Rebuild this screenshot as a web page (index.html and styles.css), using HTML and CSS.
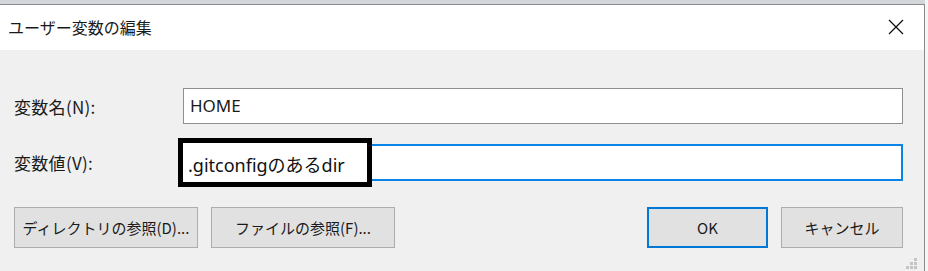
FILE: index.html
```html
<!DOCTYPE html>
<html lang="ja">
	<head>
		<meta charset="utf-8">
		<title>ユーザー変数の編集</title>
		<link rel="stylesheet" href="styles.css">
	</head>
	<body>
		<div class="backdrop"></div>
		<div class="dialog">
			<div class="titlebar">
				<span class="title">ユーザー変数の編集</span>
				<span class="close">
					<svg width="16" height="16" viewBox="0 0 16 16">
						<path d="M1 1 L15 15 M15 1 L1 15" stroke="#111" stroke-width="1.3" fill="none"/>
					</svg>
				</span>
			</div>
			<div class="content">
				<div class="row">
					<label class="lbl">変数名(N):</label>
					<div class="field">HOME</div>
				</div>
				<div class="row">
					<label class="lbl">変数値(V):</label>
					<div class="field focus">
						<div class="note">.gitconfigのあるdir</div>
					</div>
				</div>
				<div class="buttons">
					<button class="btn wide">ディレクトリの参照(D)...</button>
					<button class="btn wide">ファイルの参照(F)...</button>
					<span class="spacer"></span>
					<button class="btn ok">OK</button>
					<button class="btn">キャンセル</button>
				</div>
				<svg class="grip" width="14" height="14" viewBox="0 0 14 14">
					<rect x="10" y="2" width="3" height="3" fill="#c4c4c4"/>
					<rect x="6" y="6" width="3" height="3" fill="#c4c4c4"/>
					<rect x="10" y="6" width="3" height="3" fill="#c4c4c4"/>
					<rect x="2" y="10" width="3" height="3" fill="#c4c4c4"/>
					<rect x="6" y="10" width="3" height="3" fill="#c4c4c4"/>
					<rect x="10" y="10" width="3" height="3" fill="#c4c4c4"/>
				</svg>
			</div>
		</div>
	</body>
</html>
```
FILE: styles.css
```css
html{
	background-color:#f6f6f6;
}
body{
	margin:0;
	width:928px;
	height:271px;
	overflow:hidden;
	font-family:"Noto Sans CJK JP","Noto Sans",sans-serif;
	color:#1a1a1a;
}
.backdrop{
	height:4px;
	background-color:#d3d6db;
	border-bottom:1px solid #8a8a8a;
	width:925px;
}
.dialog{
	width:924px;
	border-right:1px solid #8a8a8a;
	display:flex;
	flex-direction:column;
}
.titlebar{
	height:45px;
	background-color:#fff;
	display:flex;
	align-items:center;
	justify-content:space-between;
	padding:0 20px 0 8px;
}
.title{
	font-size:16px;
	margin-top:-2px;
}
.close{
	display:flex;
	margin-top:-2px;
}
.content{
	position:relative;
	background-color:#f0f0f0;
	height:221px;
	padding:38px 21px 0 14px;
	box-sizing:border-box;
}
.row{
	display:flex;
	align-items:center;
	margin-bottom:20px;
}
.lbl{
	width:169px;
	font-size:17px;
	letter-spacing:0.3px;
}
.field{
	position:relative;
	width:720px;
	height:36px;
	box-sizing:border-box;
	background-color:#fff;
	border:1px solid #8f8f8f;
	font-family:"Noto Sans","Noto Sans CJK JP",sans-serif;
	font-size:17px;
	line-height:34px;
	padding-left:6px;
}
.field.focus{
	height:37px;
	border:2px solid #0a84e6;
}
.note{
	position:absolute;
	left:-7px;
	top:-8px;
	width:194px;
	height:49px;
	box-sizing:border-box;
	border:5px solid #000;
	background-color:#fff;
	font-size:18px;
	line-height:44px;
	padding-left:5px;
	color:#111;
	white-space:nowrap;
}
.buttons{
	display:flex;
	margin-top:26px;
	gap:13px;
}
.spacer{
	flex:1;
}
.btn{
	height:41px;
	min-width:122px;
	background-color:#e1e1e1;
	border:1px solid #adadad;
	font-family:"Noto Sans CJK JP","Noto Sans",sans-serif;
	font-size:15px;
	color:#1a1a1a;
	padding:0;
}
.btn.wide{
	width:184px;
}
.btn.ok{
	width:121px;
	min-width:0;
	border:2px solid #0078d7;
}
.grip{
	position:absolute;
	right:6px;
	bottom:1px;
}
```
